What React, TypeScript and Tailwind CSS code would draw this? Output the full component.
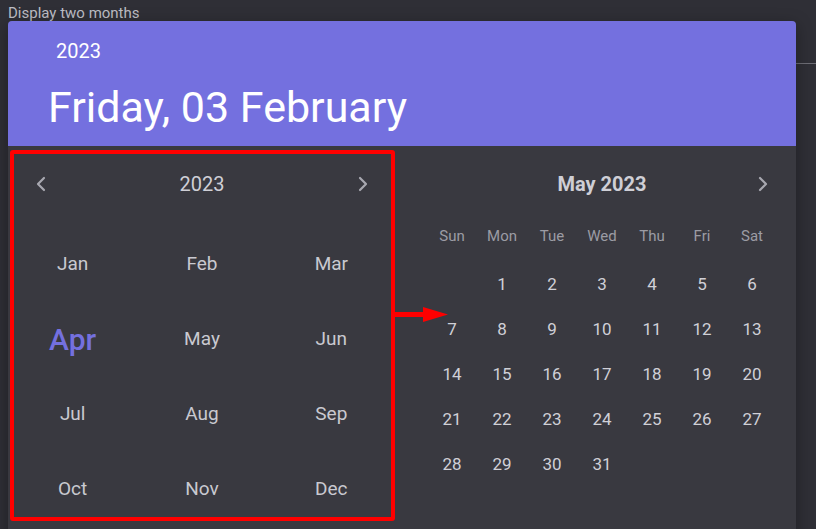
import React from 'react';

const MONTHS = ['Jan', 'Feb', 'Mar', 'Apr', 'May', 'Jun', 'Jul', 'Aug', 'Sep', 'Oct', 'Nov', 'Dec'];
const WEEKDAYS = ['Sun', 'Mon', 'Tue', 'Wed', 'Thu', 'Fri', 'Sat'];

// May 2023 starts on a Monday
const DAYS: (number | null)[] = [null, ...Array.from({ length: 31 }, (_, i) => i + 1)];

function Chevron({ dir }: { dir: 'left' | 'right' }) {
  return (
    <svg width="10" height="16" viewBox="0 0 10 16" className="text-[#a8a8b0]">
      <polyline
        points={dir === 'left' ? '8,2 2,8 8,14' : '2,2 8,8 2,14'}
        fill="none"
        stroke="currentColor"
        strokeWidth="2.2"
        strokeLinecap="round"
        strokeLinejoin="round"
      />
    </svg>
  );
}

function YearPanel() {
  return (
    <div className="w-[388px] shrink-0">
      <div className="mt-[16px] h-[44px] px-[21px] grid grid-cols-[24px_1fr_24px] items-center">
        <button className="h-[24px] flex items-center justify-center"><Chevron dir="left" /></button>
        <div className="text-center text-[20px] text-[#cfcfd6]">2023</div>
        <button className="h-[24px] flex items-center justify-center"><Chevron dir="right" /></button>
      </div>
      <div className="mt-[21px] grid grid-cols-3">
        {MONTHS.map(m => (
          <div key={m} className="h-[75px] flex items-center justify-center">
            {m === 'Apr' ? (
              <span className="text-[30px] font-medium text-[#7470df]">{m}</span>
            ) : (
              <span className="text-[19px] text-[#c9c9d0]">{m}</span>
            )}
          </div>
        ))}
      </div>
    </div>
  );
}

function MonthPanel() {
  return (
    <div className="flex-1 pl-[12px]">
      <div className="mt-[16px] h-[44px] px-[21px] grid grid-cols-[24px_1fr_24px] items-center">
        <div />
        <div className="text-center text-[20px] font-bold text-[#cfcfd6]">May 2023</div>
        <button className="h-[24px] flex items-center justify-center"><Chevron dir="right" /></button>
      </div>
      <div className="mt-[14px] w-[350px] mx-auto grid grid-cols-7">
        {WEEKDAYS.map(d => (
          <div key={d} className="h-[32px] flex items-center justify-center text-[15px] text-[#9c9ca4]">{d}</div>
        ))}
      </div>
      <div className="mt-[10px] w-[350px] mx-auto grid grid-cols-7">
        {DAYS.map((d, i) => (
          <div key={i} className="h-[45px] flex items-center justify-center text-[17px] text-[#d0d0d7]">{d ?? ''}</div>
        ))}
      </div>
    </div>
  );
}

export default function App() {
  return (
    <div className="relative min-h-[529px] bg-[#2f2f36] font-['Roboto','Liberation_Sans',sans-serif] overflow-hidden">
      <div className="absolute left-[796px] right-0 top-[63px] h-px bg-[#6d6d75]" />
      <div className="relative h-[21px] pt-[5px] pl-[8px] text-[15px] leading-[16px] text-[#bdbdc4]">Display two months</div>

      <div className="relative mx-[8px] w-[788px] rounded-t-[4px] bg-[#393940] shadow-[0_4px_16px_rgba(0,0,0,0.35)]">
        <div className="rounded-t-[4px] bg-[#7470df] px-[40px] pt-[18px] pb-[14px] text-white">
          <div className="ml-[8px] text-[20px] leading-[24px]">2023</div>
          <div className="mt-[19px] text-[43px] leading-[50px]">Friday, 03 February</div>
        </div>
        <div className="flex pb-[20px]">
          <YearPanel />
          <MonthPanel />
        </div>
      </div>

      {/* annotation overlay */}
      <div className="absolute left-[10px] top-[150px] w-[385px] h-[371px] border-[4px] border-[#ff0000] rounded-[3px] pointer-events-none" />
      <svg className="absolute left-[395px] top-[305px]" width="54" height="20" viewBox="0 0 54 20">
        <rect x="0" y="7" width="29" height="5" fill="#ff0000" />
        <polygon points="28,2 53,9.5 28,17" fill="#ff0000" />
      </svg>
    </div>
  );
}
